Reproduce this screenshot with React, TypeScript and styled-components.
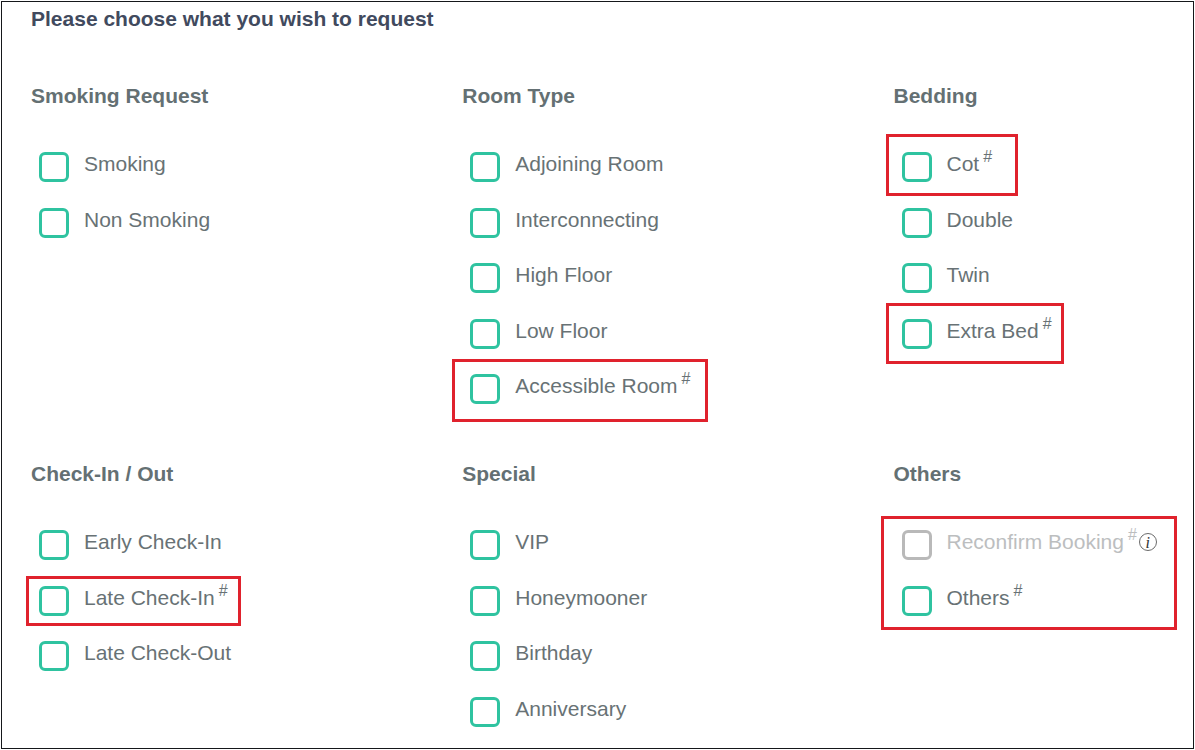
import React from "react";
import styled, { createGlobalStyle, css } from "styled-components";

const GlobalStyle = createGlobalStyle`
  *, *::before, *::after { box-sizing: border-box; }
  body {
    margin: 0;
    background: #fff;
    font-family: "Liberation Sans", Arial, sans-serif;
    font-size: 21px;
    line-height: 24px;
    color: #687275;
  }
`;

const ROW_HEIGHT = 30;

const Frame = styled.form`
  margin: 1px;
  min-height: calc(100vh - 2px);
  padding: 5px 12px 21px 29px;
  border: 1px solid #15171a;
  background: #fff;
`;

const Title = styled.h1`
  margin: 0 0 53px;
  font-size: 21px;
  line-height: 24px;
  color: #414a5e;
`;

const Groups = styled.div`
  display: grid;
  grid-template-columns: 3fr 3fr 2fr;
  row-gap: 58px;
`;

const GroupTitle = styled.h2`
  margin: 0 0 44px;
  font-size: 21px;
  line-height: 24px;
  color: #647073;
`;

const Options = styled.ul<{ $slots: number; $height: number }>`
  display: grid;
  grid-template-rows: repeat(${(p) => p.$slots}, ${ROW_HEIGHT}px);
  align-content: space-between;
  justify-items: start;
  min-height: ${(p) => p.$height}px;
  margin: 0;
  padding: 0 0 0 8px;
  list-style: none;
`;

const Option = styled.li`
  position: relative;
  display: flex;
  align-items: flex-start;
  white-space: nowrap;
`;

const OptionLabel = styled.label<{ $disabled?: boolean }>`
  display: flex;
  align-items: flex-start;
  gap: 15px;
  cursor: pointer;
  ${(p) =>
    p.$disabled &&
    css`
      color: #bcbebf;
      cursor: default;
    `}
`;

const Checkbox = styled.input`
  appearance: none;
  flex: none;
  width: ${ROW_HEIGHT}px;
  height: ${ROW_HEIGHT}px;
  margin: 0;
  border: 3px solid #2fc3a0;
  border-radius: 6px;
  background: #fff;
  cursor: inherit;
  &:checked {
    background: #2fc3a0;
    box-shadow: inset 0 0 0 3px #fff;
  }
  &:disabled {
    border-color: #b9b9b9;
  }
`;

const Mark = styled.sup`
  margin-left: 4px;
  font-size: 16px;
  line-height: 0;
  vertical-align: 9px;
`;

const InfoButton = styled.button`
  flex: none;
  width: 18px;
  height: 18px;
  margin: 3px 0 0 2px;
  padding: 0;
  border: 1px solid #6b6b6b;
  border-radius: 50%;
  background: none;
  color: #333;
  font: italic 16px/15px "Liberation Serif", serif;
  text-align: center;
  cursor: pointer;
`;

type Inset = [top: number, right: number, bottom: number, left: number];

const Highlight = styled.span<{ $outset: Inset }>`
  position: absolute;
  inset: ${(p) => p.$outset.map((n) => `${-n}px`).join(" ")};
  border: 3px solid #e0222d;
  pointer-events: none;
`;

interface Choice {
  label: string;
  marked?: boolean;
  disabled?: boolean;
  info?: boolean;
  highlight?: Inset;
}

interface Group {
  title: string;
  slots: number;
  height: number;
  choices: Choice[];
}

const TALL = { slots: 5, height: 252 };
const SHORT = { slots: 4, height: 197 };

const groups: Group[] = [
  { title: "Smoking Request", ...TALL, choices: [{ label: "Smoking" }, { label: "Non Smoking" }] },
  {
    title: "Room Type",
    ...TALL,
    choices: [
      { label: "Adjoining Room" },
      { label: "Interconnecting" },
      { label: "High Floor" },
      { label: "Low Floor" },
      { label: "Accessible Room", marked: true, highlight: [15, 18, 18, 18] },
    ],
  },
  {
    title: "Bedding",
    ...TALL,
    choices: [
      { label: "Cot", marked: true, highlight: [18, 26, 14, 16] },
      { label: "Double" },
      { label: "Twin" },
      { label: "Extra Bed", marked: true, highlight: [16, 12, 15, 16] },
    ],
  },
  {
    title: "Check-In / Out",
    ...SHORT,
    choices: [
      { label: "Early Check-In" },
      { label: "Late Check-In", marked: true, highlight: [10, 13, 10, 13] },
      { label: "Late Check-Out" },
    ],
  },
  {
    title: "Special",
    ...SHORT,
    choices: [{ label: "VIP" }, { label: "Honeymooner" }, { label: "Birthday" }, { label: "Anniversary" }],
  },
  {
    title: "Others",
    ...SHORT,
    choices: [
      { label: "Reconfirm Booking", marked: true, disabled: true, info: true, highlight: [14, 20, 70, 21] },
      { label: "Others", marked: true },
    ],
  },
];

function RequestOption({ id, choice }: { id: string; choice: Choice }) {
  return (
    <Option>
      <OptionLabel htmlFor={id} $disabled={choice.disabled}>
        <Checkbox id={id} type="checkbox" disabled={choice.disabled} />
        <span>
          {choice.label}
          {choice.marked && <Mark>#</Mark>}
        </span>
      </OptionLabel>
      {choice.info && <InfoButton type="button">i</InfoButton>}
      {choice.highlight && <Highlight $outset={choice.highlight} />}
    </Option>
  );
}

export default function App() {
  return (
    <>
      <GlobalStyle />
      <Frame>
        <Title>Please choose what you wish to request</Title>
        <Groups>
          {groups.map((group, g) => (
            <section key={group.title} role="group" aria-labelledby={`group-${g}`}>
              <GroupTitle id={`group-${g}`}>{group.title}</GroupTitle>
              <Options $slots={group.slots} $height={group.height}>
                {group.choices.map((choice, c) => (
                  <RequestOption key={choice.label} id={`option-${g}-${c}`} choice={choice} />
                ))}
              </Options>
            </section>
          ))}
        </Groups>
      </Frame>
    </>
  );
}
